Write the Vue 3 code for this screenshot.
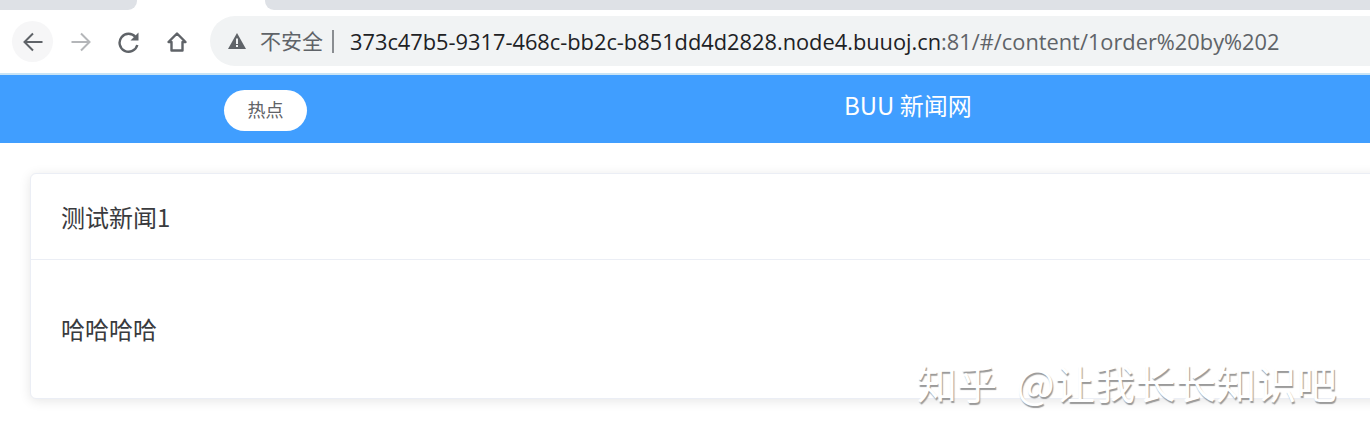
<script setup>
const title = '测试新闻1'
const body = '哈哈哈哈'
</script>

<template>
  <div class="page">
    <div class="tabstrip">
      <div class="tab left"></div>
      <div class="tab active"></div>
      <div class="tab right"></div>
    </div>

    <div class="toolbar">
      <div class="nav">
        <button class="nav-btn hover" type="button">
          <svg width="24" height="24" viewBox="0 0 24 24" fill="none" stroke="#5f6368" stroke-width="2">
            <path d="M21.5 12H3.5M12 3.5L3.5 12l8.500 8.500" />
          </svg>
        </button>
        <button class="nav-btn" type="button">
          <svg width="24" height="24" viewBox="0 0 24 24" fill="none" stroke="#b4b6b9" stroke-width="2">
            <path d="M2.500 12H20.500M12 3.500L20.500 12 12 20.500" />
          </svg>
        </button>
        <button class="nav-btn" type="button">
          <svg width="24" height="24" viewBox="0 0 24 24" fill="none" stroke="#5f6368" stroke-width="2.400">
            <path d="M18.500 7A9 9 0 1 0 20.300 15" />
            <path d="M21.500 2.500v8h-8z" fill="#5f6368" stroke="none" />
          </svg>
        </button>
        <button class="nav-btn" type="button">
          <svg width="24" height="24" viewBox="0 0 24 24" fill="none" stroke="#5f6368" stroke-width="2.400">
            <path d="M12 3.500L3.500 12H6.500v8.500h11V12h3z" stroke-linejoin="round" />
          </svg>
        </button>
      </div>

      <div class="omnibox">
        <svg class="warn" width="20" height="18" viewBox="0 0 20 18">
          <path d="M10 1L19 17H1z" fill="#5f6368" />
          <rect x="9" y="6.500" width="2" height="5.500" fill="#f1f3f4" />
          <rect x="9" y="13" width="2" height="2" fill="#f1f3f4" />
        </svg>
        <span class="insecure">不安全</span>
        <span class="sep"></span>
        <span class="url"><span class="host">373c47b5-9317-468c-bb2c-b851dd4d2828.node4.buuoj.cn</span>:81/#/content/1order%20by%202</span>
      </div>
    </div>

    <header class="site-header">
      <div class="header-left">
        <button class="hot-btn" type="button">热点</button>
      </div>
      <div class="brand">BUU 新闻网</div>
    </header>

    <main class="main">
      <article class="card">
        <div class="card-header">{{ title }}</div>
        <div class="card-body">{{ body }}</div>
      </article>
    </main>

    <div class="watermark">知乎 @让我长长知识吧</div>
  </div>
</template>

<style scoped>
.page {
  position: relative;
  width: 1370px;
  height: 441px;
  overflow: hidden;
  background: #fff;
  font-family: "Noto Sans CJK SC", "Liberation Sans", sans-serif;
}

.tabstrip {
  display: flex;
  height: 10px;
  background: #fff;
}

.tab {
  height: 10px;
  background: #dee1e6;
}

.tab.left {
  width: 137px;
  border-bottom-right-radius: 9px;
}

.tab.active {
  width: 128px;
  background: #fff;
}

.tab.right {
  flex: 1;
  border-bottom-left-radius: 9px;
}

.toolbar {
  display: flex;
  align-items: center;
  height: 63px;
  border-bottom: 2px solid #c9e4f5;
  background: #fff;
}

.nav {
  display: flex;
  align-items: center;
  gap: 7px;
  width: 210px;
  padding-left: 12px;
  box-sizing: border-box;
}

.nav-btn {
  display: flex;
  align-items: center;
  justify-content: center;
  width: 41px;
  height: 41px;
  padding: 0;
  border: none;
  border-radius: 50%;
  background: none;
}

.nav-btn.hover {
  background: #f6f6f7;
}

.omnibox {
  display: flex;
  flex: 1;
  align-items: center;
  height: 50px;
  margin-top: -1px;
  padding-left: 17px;
  border-radius: 25px 0 0 25px;
  background: #f1f3f4;
}

.warn {
  flex: none;
}

.insecure {
  margin-left: 13px;
  margin-top: -2px;
  color: #5f6368;
  font-size: 21px;
}

.sep {
  width: 2px;
  height: 23px;
  margin: 0 16px 0 9px;
  background: #8a8d91;
}

.url {
  color: #5f6368;
  font-family: "Open Sans", "Liberation Sans", sans-serif;
  font-size: 21.8px;
  white-space: nowrap;
}

.host {
  color: #202124;
}

.site-header {
  display: flex;
  align-items: center;
  height: 68px;
  background: #409eff;
}

.header-left {
  width: 844px;
  padding-left: 224px;
  box-sizing: border-box;
}

.hot-btn {
  display: block;
  width: 83px;
  height: 41px;
  margin-top: 3px;
  padding: 0 0 3px;
  border: none;
  border-radius: 21px;
  background: #fff;
  color: #606266;
  font-family: inherit;
  font-size: 18px;
}

.brand {
  margin-top: -10px;
  color: #fff;
  font-size: 24px;
  white-space: nowrap;
}

.main {
  padding: 30px 0 0 30px;
}

.card {
  width: 1400px;
  height: 226px;
  box-sizing: border-box;
  border: 1px solid #ebeef5;
  border-radius: 6px;
  background: #fff;
  box-shadow: 0 2px 12px rgba(0, 0, 0, 0.1);
  color: #3a3b3e;
  font-size: 24px;
}

.card-header {
  height: 85px;
  padding-left: 30px;
  border-bottom: 1px solid #ebeef5;
  line-height: 85px;
}

.card-body {
  padding-left: 30px;
  line-height: 138px;
}

.watermark {
  position: absolute;
  top: 354px;
  left: 917px;
  color: #fff;
  font-size: 40px;
  line-height: 56px;
  word-spacing: 10px;
  letter-spacing: 0.3px;
  white-space: nowrap;
  text-shadow: 1px 2px 1px #9a9a9a;
}
</style>
